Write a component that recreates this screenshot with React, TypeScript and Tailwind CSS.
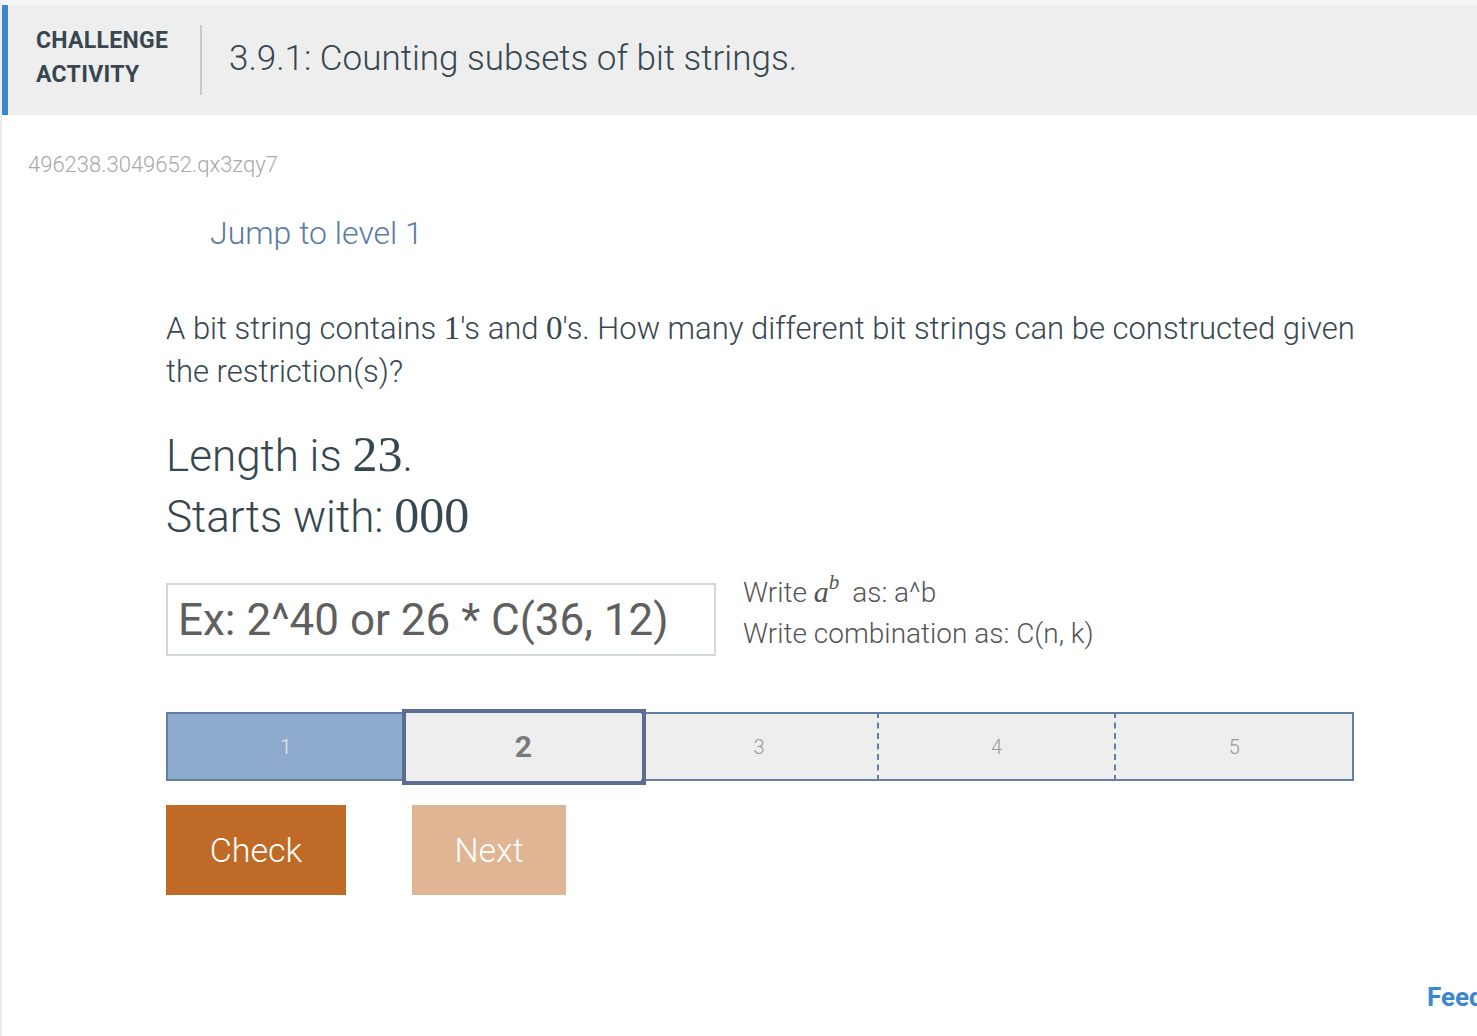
import React from 'react';

const Tex = ({ children, className = '' }: { children: React.ReactNode; className?: string }) => (
  <span className={`font-['Liberation_Serif',serif] ${className}`}>{children}</span>
);

const Segment = ({ n, state }: { n: number; state: 'done' | 'current' | 'todo' | 'last' }) => {
  if (state === 'done') {
    return (
      <div className="flex-1 h-[69px] flex items-center justify-center bg-[#8eabcd] border-2 border-[#6280a5] text-[20px] text-[#e8eef5] font-light">
        {n}
      </div>
    );
  }
  if (state === 'current') {
    return (
      <div className="relative flex-1 h-[69px] flex items-center justify-center bg-[#eeeeee] text-[30px] font-bold text-[#7a7a7a]">
        <div className="absolute -left-[4px] -right-[5px] -top-[3px] -bottom-[4px] border-[4px] border-[#5b6e8f]" />
        <span className="relative">{n}</span>
      </div>
    );
  }
  return (
    <div
      className="flex-1 h-[69px] flex items-center justify-center bg-[#eeeeee] border-y-2 border-r-2 border-[#6280a5] text-[20px] text-[#9a9a9a] font-light"
      style={state === 'last' ? undefined : { borderRightStyle: 'dashed' }}
    >
      {n}
    </div>
  );
};

export default function App() {
  return (
    <div className="w-[1477px] h-[1036px] overflow-hidden bg-white font-['Roboto',sans-serif] text-[#37474f]">
      <div className="h-[5px] bg-[#f4f4f4]" />
      <div className="border-l-2 border-[#ededed] h-[1031px] relative">
        <header className="h-[110px] bg-[#eeeeee] border-l-[6px] border-[#3a87d0] flex items-center pl-[28px]">
          <div className="text-[23px] font-bold leading-[34px] tracking-[0.3px] text-[#37474f] -mt-[5px] w-[164px]">
            <div>CHALLENGE</div>
            <div>ACTIVITY</div>
          </div>
          <div className="w-[2px] h-[70px] bg-[#c8c8c8]" />
          <h1 className="ml-[27px] text-[35px] font-light text-[#37474f] -mt-[2px]">
            3.9.1: Counting subsets of bit strings.
          </h1>
        </header>

        <div className="pl-[26px] pt-[38px] text-[22px] leading-[24px] font-light text-[#a8a8a8]">
          496238.3049652.qx3zqy7
        </div>

        <div className="pl-[208px] pt-[36px] text-[32px] leading-[40px] font-light text-[#5a7aa6]">Jump to level 1</div>

        <div className="ml-[164px] w-[1188px]">
          <p className="mt-[54px] w-[1215px] text-[31px] leading-[43px] font-light text-[#37474f]">
            A bit string contains <Tex className="text-[33px] leading-[0]">1</Tex>'s and <Tex className="text-[33px] leading-[0]">0</Tex>'s. How
            many different bit strings can be constructed given the restriction(s)?
          </p>

          <div className="mt-[33px] text-[44px] leading-[61px] font-light text-[#37474f]">
            <div>
              Length is <Tex className="text-[50px] leading-[0]">23</Tex>.
            </div>
            <div>
              Starts with: <Tex className="text-[50px] leading-[0]">000</Tex>
            </div>
          </div>

          <div className="mt-[35px] flex items-start">
            <div className="w-[550px] h-[73px] border-2 border-[#d3d8dc] flex items-center pl-[10px] text-[44px] text-[#5f5f5f]">
              Ex: 2^40 or 26 * C(36, 12)
            </div>
            <div className="ml-[27px] text-[28px] font-light text-[#555] leading-[41px] -mt-[11px]">
              <div>
                Write <Tex className="italic text-[30px] leading-[0]">a</Tex>
                <sup className="font-['Liberation_Serif',serif] italic text-[21px] -top-[13px] mr-[6px]">b</sup> as: a^b
              </div>
              <div>Write combination as: C(n, k)</div>
            </div>
          </div>

          <div className="mt-[56px] flex items-center">
            <Segment n={1} state="done" />
            <Segment n={2} state="current" />
            <Segment n={3} state="todo" />
            <Segment n={4} state="todo" />
            <Segment n={5} state="last" />
          </div>

          <div className="mt-[24px] flex gap-[66px]">
            <button className="w-[180px] h-[90px] bg-[#bf6a27] text-white text-[34px] font-light">Check</button>
            <button className="w-[154px] h-[90px] bg-[#e0b593] text-white text-[34px] font-light">Next</button>
          </div>
        </div>

        <div className="absolute left-[1425px] top-[973px] whitespace-nowrap text-[26px] font-bold text-[#3a87d0]">
          Feedback?
        </div>
      </div>
    </div>
  );
}
